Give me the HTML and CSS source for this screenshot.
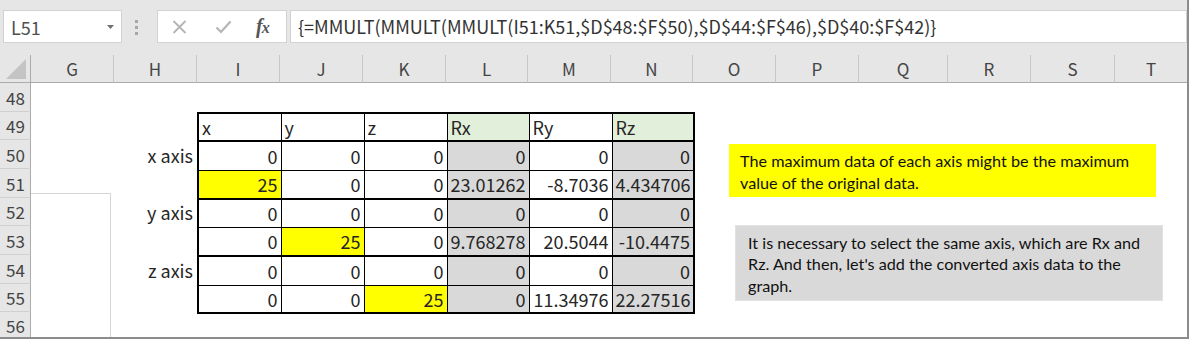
FILE: index.html
```html
<!DOCTYPE html>
<html lang="en">
<head>
  <meta charset="UTF-8">
  <title>Rotation matrix sheet</title>
  <link rel="stylesheet" href="styles.css">
</head>
<body>
  <div class="window">
    <div class="formula-bar">
      <div class="name-box">
        <span>L51</span>
        <svg class="caret" width="7" height="4" viewBox="0 0 7 4"><path d="M0 0h7L3.5 4z" fill="#707070"/></svg>
      </div>
      <div class="grip"><span></span><span></span><span></span></div>
      <div class="fx-box">
        <svg width="15" height="14" viewBox="0 0 15 14"><path d="M1.5 1l12 12M13.5 1l-12 12" stroke="#b4b4b4" stroke-width="1.8" fill="none"/></svg>
        <svg width="17" height="14" viewBox="0 0 17 14"><path d="M1.5 7.5l4.5 4.5L15.5 1.5" stroke="#b4b4b4" stroke-width="2.2" fill="none"/></svg>
        <span class="fx"><i>f</i><i class="x">x</i></span>
      </div>
      <div class="formula">{=MMULT(MMULT(MMULT(I51:K51,$D$48:$F$50),$D$44:$F$46),$D$40:$F$42)}</div>
    </div>

    <div class="sheet">
      <div class="corner">
        <svg width="20" height="20" viewBox="0 0 20 20"><path d="M20 0v20H0z" fill="#c4c4c4"/></svg>
      </div>
      <div class="col-head">G</div>
      <div class="col-head">H</div>
      <div class="col-head">I</div>
      <div class="col-head">J</div>
      <div class="col-head">K</div>
      <div class="col-head">L</div>
      <div class="col-head">M</div>
      <div class="col-head">N</div>
      <div class="col-head">O</div>
      <div class="col-head">P</div>
      <div class="col-head">Q</div>
      <div class="col-head">R</div>
      <div class="col-head">S</div>
      <div class="col-head last">T</div>

      <div class="row-head r48">48</div>
      <div class="row-head r49">49</div>
      <div class="row-head r50">50</div>
      <div class="row-head r51">51</div>
      <div class="row-head r52">52</div>
      <div class="row-head r53">53</div>
      <div class="row-head r54">54</div>
      <div class="row-head r55">55</div>
      <div class="row-head r56">56</div>

      <div class="axis-label r50">x axis</div>
      <div class="axis-label r52">y axis</div>
      <div class="axis-label r54">z axis</div>

      <table class="matrix">
        <colgroup>
          <col class="w83"><col class="w83"><col class="w83"><col class="w82"><col class="w83"><col class="w82">
        </colgroup>
        <tr class="h28 block-end">
          <td class="head">x</td><td class="head">y</td><td class="head">z</td>
          <td class="head green">Rx</td><td class="head">Ry</td><td class="head green">Rz</td>
        </tr>
        <tr class="h29">
          <td>0</td><td>0</td><td>0</td><td class="grey">0</td><td>0</td><td class="grey">0</td>
        </tr>
        <tr class="h29 block-end">
          <td class="yellow">25</td><td>0</td><td>0</td><td class="grey">23.01262</td><td>-8.7036</td><td class="grey">4.434706</td>
        </tr>
        <tr class="h28">
          <td>0</td><td>0</td><td>0</td><td class="grey">0</td><td>0</td><td class="grey">0</td>
        </tr>
        <tr class="h29 block-end">
          <td>0</td><td class="yellow">25</td><td>0</td><td class="grey">9.768278</td><td>20.5044</td><td class="grey">-10.4475</td>
        </tr>
        <tr class="h29">
          <td>0</td><td>0</td><td>0</td><td class="grey">0</td><td>0</td><td class="grey">0</td>
        </tr>
        <tr class="h28">
          <td>0</td><td>0</td><td class="yellow">25</td><td class="grey">0</td><td>11.34976</td><td class="grey">22.27516</td>
        </tr>
      </table>

      <!-- shapes floating over the grid -->
      <div class="shape blank-box"></div>
      <div class="shape note note-yellow">The maximum data of each axis might be the maximum<br>value of the original data.</div>
      <div class="shape note note-grey">It is necessary to select the same axis, which are Rx and<br>Rz. And then, let's add the converted axis data to the<br>graph.</div>
    </div>
  </div>
</body>
</html>
```

FILE: styles.css
```css
:root {
  --chrome-bg: #e6e6e6;
  --chrome-line: #d2d2d2;
  --head-line: #ababab;
  --head-text: #444444;
  --cell-text: #262626;
  --ui-font: "Noto Sans CJK JP", "Noto Sans", sans-serif;
  --note-font: "Lato", "Open Sans", sans-serif;
  --fill-grey: #d9d9d9;
  --fill-green: #e2efda;
  --fill-yellow: #ffff00;
}

* {
  box-sizing: border-box;
}

body {
  margin: 0;
  background: #ffffff;
  font-family: var(--ui-font);
}

.window {
  width: 1189px;
  height: 339px;
  overflow: hidden;
  border-right: 2px solid #8c8c8c;
  border-bottom: 2px solid #8c8c8c;
  background: #ffffff;
}

/* formula bar */

.formula-bar {
  display: flex;
  align-items: flex-start;
  height: 55px;
  padding: 10px 0 0 3px;
  background: var(--chrome-bg);
}

.name-box,
.fx-box,
.formula {
  height: 33px;
  background: #ffffff;
  border: 1px solid var(--chrome-line);
}

.name-box {
  display: flex;
  align-items: center;
  justify-content: space-between;
  width: 119px;
  padding: 0 7px 0 7px;
  color: #505050;
  font-size: 18px;
}

.caret {
  margin-top: 1px;
}

.grip {
  display: flex;
  flex-direction: column;
  gap: 3px;
  width: 35px;
  padding: 10px 0 0 13px;
}

.grip span {
  width: 3px;
  height: 3px;
  background: #a6a6a6;
}

.fx-box {
  display: flex;
  align-items: center;
  gap: 0;
  width: 130px;
  padding: 0 0 0 14px;
}

.fx-box svg:first-child {
  margin-right: 28px;
}

.fx-box svg:nth-child(2) {
  margin-right: 24px;
}

.fx {
  font-family: "Liberation Serif", serif;
  font-size: 20px;
  font-weight: bold;
  color: #555555;
  letter-spacing: -1px;
}

.fx .x {
  font-size: 16px;
}

.formula {
  flex: 1;
  margin-left: 3px;
  padding: 0 0 0 7px;
  color: #333333;
  font-size: 18px;
  line-height: 31px;
  white-space: nowrap;
}

/* sheet grid */

.sheet {
  position: relative;
  display: grid;
  grid-template-columns: 31px 83px 83px 83px 83px 83px 82px 83px 82px 83px 83px 89px 83px 84px 1fr;
  grid-template-rows: 28px 29px 28px 29px 29px 28px 29px 29px 28px 28px;
}

.corner {
  grid-column: 1;
  grid-row: 1;
  display: flex;
  align-items: flex-end;
  justify-content: flex-end;
  padding: 0 4px 3px 0;
  background: var(--chrome-bg);
  border-right: 1px solid var(--head-line);
  border-bottom: 1px solid var(--head-line);
}

.col-head {
  grid-row: 1;
  display: flex;
  align-items: center;
  justify-content: center;
  background: var(--chrome-bg);
  border-right: 1px solid #c6c6c6;
  border-bottom: 1px solid var(--head-line);
  color: var(--head-text);
  font-size: 17px;
}

.col-head.last {
  border-right: none;
}

.row-head {
  grid-column: 1;
  display: flex;
  align-items: center;
  padding-left: 6px;
  background: var(--chrome-bg);
  border-right: 1px solid var(--head-line);
  border-bottom: 1px solid #d0d0d0;
  color: var(--head-text);
  font-size: 17px;
}

.r48 { grid-row: 2; }
.r49 { grid-row: 3; }
.r50 { grid-row: 4; }
.r51 { grid-row: 5; }
.r52 { grid-row: 6; }
.r53 { grid-row: 7; }
.r54 { grid-row: 8; }
.r55 { grid-row: 9; }
.r56 { grid-row: 10; }

.axis-label {
  grid-column: 3;
  display: flex;
  align-items: center;
  justify-content: flex-end;
  padding-right: 4px;
  color: var(--cell-text);
  font-size: 18px;
}

/* data block I49:N55 */

.matrix {
  grid-column: 4 / 10;
  grid-row: 3 / 10;
  width: 496px;
  table-layout: fixed;
  border-collapse: collapse;
  border: 2px solid #000000;
  color: var(--cell-text);
  font-size: 18px;
  line-height: 20px;
}

.w83 { width: 83px; }
.w82 { width: 82px; }

.h28 { height: 28px; }
.h29 { height: 29px; }

.matrix td {
  padding: 0 3px;
  border: 1px solid #000000;
  text-align: right;
  white-space: nowrap;
  vertical-align: middle;
}

.matrix .block-end td {
  border-bottom: 2px solid #000000;
}

.matrix td.head {
  text-align: left;
}

.grey { background: var(--fill-grey); }
.green { background: var(--fill-green); }
.yellow { background: var(--fill-yellow); }

/* floating shapes */

.shape {
  position: absolute;
}

.blank-box {
  left: 31px;
  top: 138px;
  width: 80px;
  height: 160px;
  border: 1px solid #d6d6d6;
  border-left: none;
}

.note {
  color: #111111;
  font-family: var(--note-font);
  font-size: 16.2px;
  white-space: nowrap;
}

.note-yellow {
  left: 729px;
  top: 89px;
  width: 427px;
  height: 53px;
  padding: 6px 0 0 11px;
  line-height: 22px;
  background: var(--fill-yellow);
}

.note-grey {
  left: 735px;
  top: 170px;
  width: 428px;
  height: 76px;
  padding: 6px 0 0 12px;
  line-height: 21.3px;
  background: var(--fill-grey);
  border: 1px solid #e2e2e2;
}
```
